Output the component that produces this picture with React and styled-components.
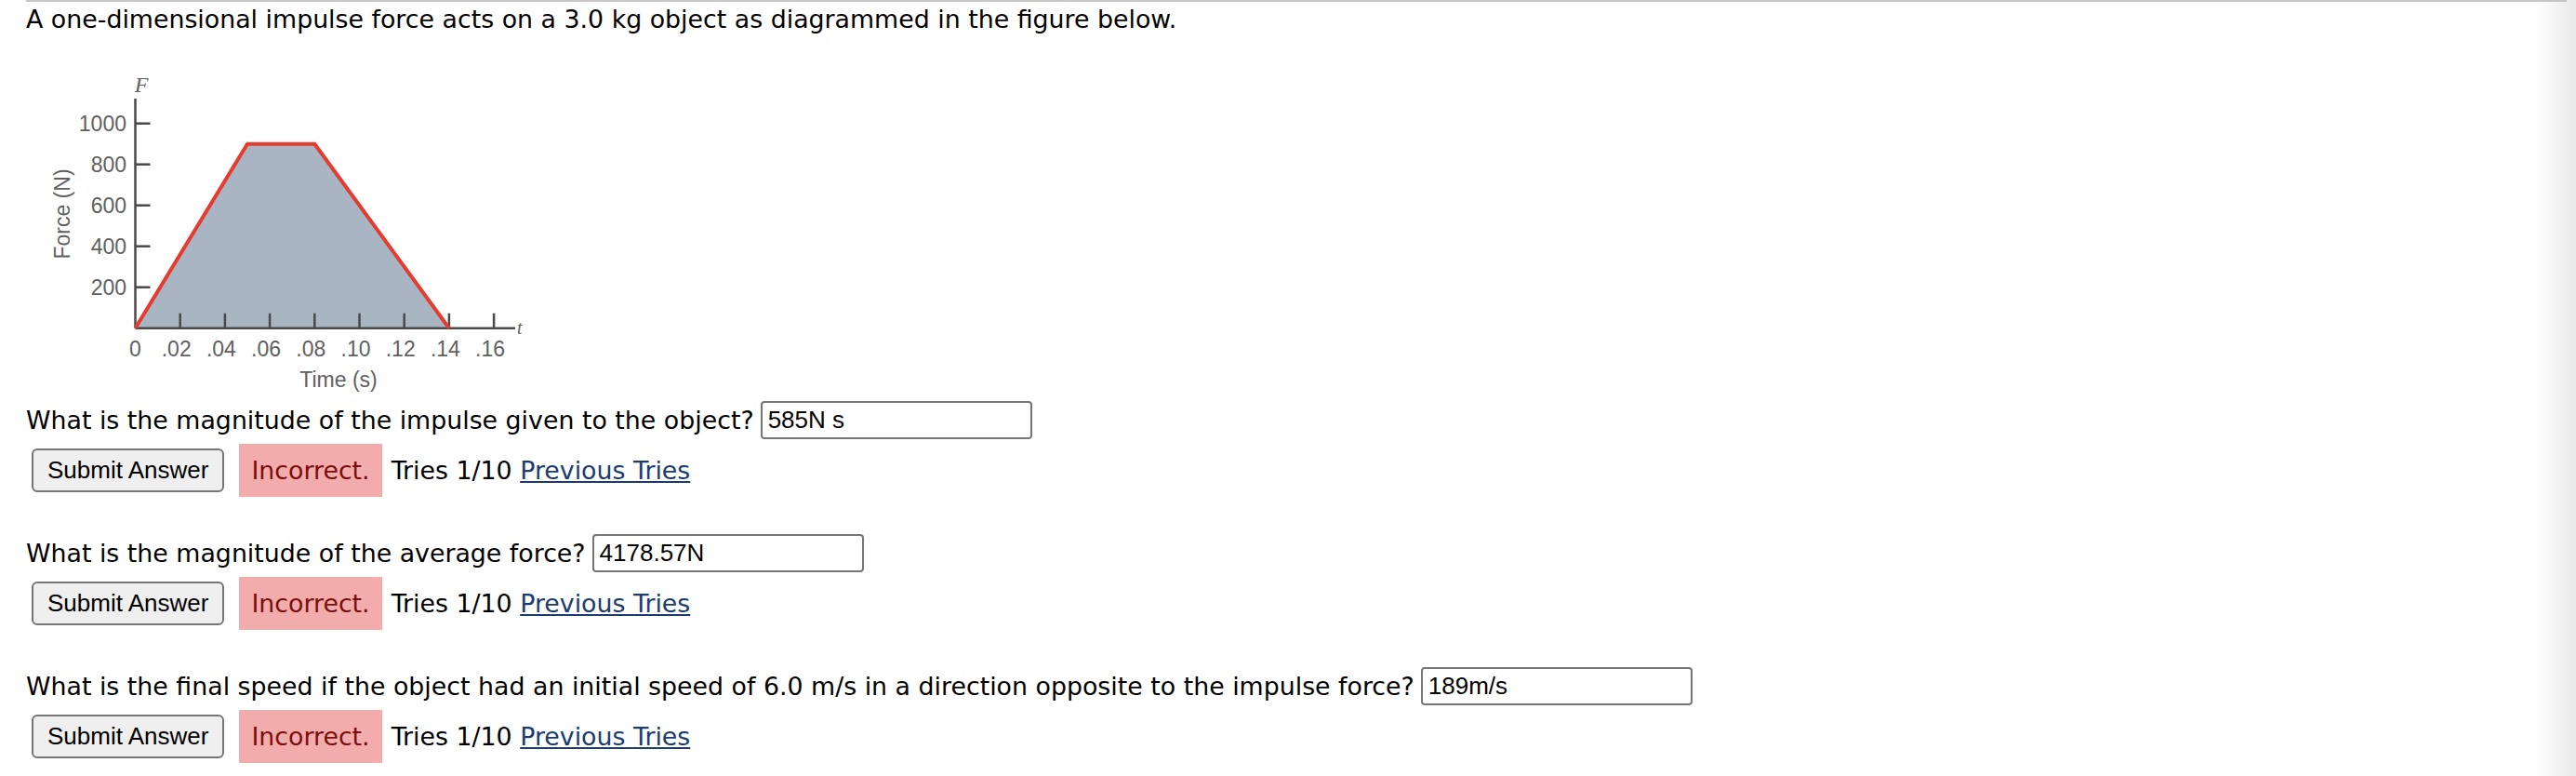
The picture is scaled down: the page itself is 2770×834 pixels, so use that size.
import React from 'react'
import styled, { createGlobalStyle } from 'styled-components'

const GlobalStyle = createGlobalStyle`
  html, body {
    margin: 0;
    padding: 0;
  }
  body {
    min-height: 834px;
    background: linear-gradient(to right, #ffffff calc(100% - 44px), #e9e9e9 100%);
    font-family: "DejaVu Sans", Verdana, sans-serif;
    color: #000;
  }
`

// chart scale
const X0 = 117.5
const Y0 = 290.7
const PX_PER_T = 48.2 / 0.02
const PX_PER_N = 44 / 200
const tx = (t) => X0 + t * PX_PER_T
const fy = (f) => Y0 - f * PX_PER_N

const pulse = [
    [0, 0],
    [0.05, 900],
    [0.08, 900],
    [0.14, 0],
]

const questions = [
    {
        text: 'What is the magnitude of the impulse given to the object?',
        value: '585N s',
    },
    {
        text: 'What is the magnitude of the average force?',
        value: '4178.57N',
    },
    {
        text: 'What is the final speed if the object had an initial speed of 6.0 m/s in a direction opposite to the impulse force?',
        value: '189m/s',
    },
]

const ForceChart = () => {
    const pts = pulse.map(([t, f]) => `${tx(t)},${fy(f)}`).join(' ')
    const yTicks = [200, 400, 600, 800, 1000]
    const xTicks = [1, 2, 3, 4, 5, 6, 7, 8]
    const xLabels = ['0', '.02', '.04', '.06', '.08', '.10', '.12', '.14', '.16']

    return (
        <Figure width="580" height="363" viewBox="0 0 580 363">
            <polygon points={pts} fill="#a9b5c3" />

            {/* axes */}
            <line x1={X0} y1={44} x2={X0} y2={Y0} stroke="#4a4a4a" strokeWidth="2.5" />
            <line x1={X0} y1={Y0} x2={526} y2={Y0} stroke="#4a4a4a" strokeWidth="2.5" />

            {yTicks.map((f) => (
                <g key={f}>
                    <line x1={X0} y1={fy(f)} x2={X0 + 16} y2={fy(f)} stroke="#4a4a4a" strokeWidth="2.5" />
                    <text x={108} y={fy(f) + 8} textAnchor="end" className="num">{f}</text>
                </g>
            ))}

            {xTicks.map((k) => (
                <line
                    key={k}
                    x1={X0 + k * 48.2}
                    y1={Y0 - 16}
                    x2={X0 + k * 48.2}
                    y2={Y0}
                    stroke="#4a4a4a"
                    strokeWidth="2.5"
                />
            ))}

            {xLabels.map((l, k) => (
                <text key={l} x={X0 + k * 48.2 - (k ? 4 : 0)} y={321} textAnchor="middle" className="num">
                    {l}
                </text>
            ))}

            <polyline points={pts} fill="none" stroke="#e63c30" strokeWidth="4" strokeLinejoin="round" />

            <text x={124} y={37} textAnchor="middle" className="var">F</text>
            <text x={528} y={297} className="var small">t</text>
            <text x={336} y={354} textAnchor="middle" className="num">Time (s)</text>
            <text x={0} y={0} textAnchor="middle" className="num" transform="translate(47 168) rotate(-90)">
                Force (N)
            </text>
        </Figure>
    )
}

const App = () => {
    return (
        <Page>
            <GlobalStyle />
            <TopRule />
            <Intro>A one-dimensional impulse force acts on a 3.0 kg object as diagrammed in the figure below.</Intro>
            <ForceChart />

            {questions.map((q) => (
                <Block key={q.text}>
                    <QuestionLine>
                        <span>{q.text}</span>
                        <AnswerInput type="text" defaultValue={q.value} />
                    </QuestionLine>
                    <AnswerRow>
                        <SubmitButton type="button">Submit Answer</SubmitButton>
                        <Status>Incorrect.</Status>
                        <Tries>
                            Tries 1/10 <a href="#prev">Previous Tries</a>
                        </Tries>
                    </AnswerRow>
                </Block>
            ))}
        </Page>
    )
}

// styled
const Page = styled.div`
    padding: 0 10px 0 28px;
    font-size: 26.8px;
`

const TopRule = styled.div`
    border-top: 2px solid #c6c6c6;
`

const Intro = styled.p`
    margin: 0;
    padding-top: 4px;
    line-height: 30px;
`

const Figure = styled.svg`
    display: block;
    margin-top: 26px;
    .num {
        font-family: "Liberation Sans", Arial, sans-serif;
        font-size: 23px;
        fill: #606060;
    }
    .var {
        font-family: "Liberation Serif", "Times New Roman", serif;
        font-style: italic;
        font-size: 24px;
        fill: #606060;
    }
    .small {
        font-size: 20px;
    }
`

const Block = styled.div`
    margin-top: 6px;
    & + & {
        margin-top: 40px;
    }
`

const QuestionLine = styled.div`
    display: flex;
    align-items: center;
    height: 41px;
    white-space: nowrap;
`

const AnswerInput = styled.input`
    box-sizing: border-box;
    width: 292px;
    height: 41px;
    margin: 0 0 0 7px;
    padding: 0 6px;
    border: 2px solid #767676;
    border-radius: 4px;
    font-family: "Liberation Sans", Arial, sans-serif;
    font-size: 26px;
    color: #000;
    background: #fff;
`

const AnswerRow = styled.div`
    display: flex;
    align-items: center;
    height: 57px;
    margin-top: 5px;
    padding-left: 6px;
`

const SubmitButton = styled.button`
    box-sizing: border-box;
    height: 47px;
    padding: 0 15px;
    border: 2px solid #767676;
    border-radius: 6px;
    background: #efefef;
    font-family: "Liberation Sans", Arial, sans-serif;
    font-size: 26px;
    color: #000;
`

const Status = styled.span`
    display: flex;
    align-items: center;
    height: 57px;
    margin-left: 16px;
    padding: 0 13px;
    background: #f3acac;
    color: #7a0e0e;
`

const Tries = styled.span`
    margin-left: 10px;
    white-space: pre;
    a {
        color: #1c3b6e;
        text-decoration: underline;
    }
`

export default App
